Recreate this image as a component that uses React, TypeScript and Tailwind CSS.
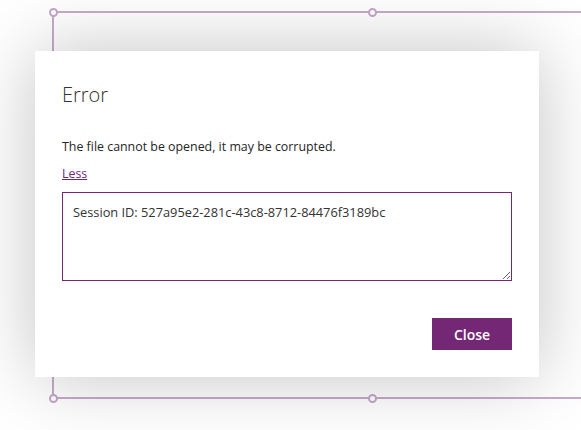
import { useState } from 'react'

const FONT = { fontFamily: '"Open Sans", "Noto Sans", sans-serif' }

function Handle({ className }: { className: string }) {
  return (
    <span
      className={`absolute w-[9px] h-[9px] rounded-full border-2 border-[#c6a6c8] bg-white ${className}`}
    />
  )
}

export default function App() {
  const [open, setOpen] = useState(true)

  return (
    <div className="relative w-[581px] h-[430px] overflow-hidden bg-white pl-[35px] pt-[51px]" style={FONT}>
      {/* selected control on the canvas, behind the dialog */}
      <div className="absolute left-[52px] top-[11px] w-[620px] h-[388px] border-2 border-r-0 border-[#c9aacb]">
        <Handle className="-left-[5.5px] -top-[5.5px]" />
        <Handle className="left-[314px] -top-[5.5px]" />
        <Handle className="-left-[5.5px] -bottom-[5.5px]" />
        <Handle className="left-[314px] -bottom-[5.5px]" />
      </div>

      {open && (
        <div className="relative z-10 w-[504px] h-[326px] bg-white shadow-[0_0_70px_rgba(0,0,0,0.24)] px-[27px] pt-[30px] flex flex-col">
          <h1 className="text-[20px] leading-[28px] font-light text-[#333333]">Error</h1>

          <p className="mt-[28px] text-[12.4px] leading-5 text-[#252525]">
            The file cannot be opened, it may be corrupted.
          </p>

          <a href="#" className="mt-[7px] w-fit text-[12.4px] leading-5 text-[#742774] underline">
            Less
          </a>

          <textarea
            readOnly
            defaultValue="Session ID: 527a95e2-281c-43c8-8712-84476f3189bc"
            className="mt-[8px] h-[89px] w-full border border-[#742774] px-[10px] pt-[9px] text-[12.8px] leading-5 text-[#333333] outline-none resize-y"
            style={FONT}
          />

          <div className="mt-[37px] flex justify-end">
            <button
              onClick={() => setOpen(false)}
              className="w-[80px] h-[32px] bg-[#742774] text-white text-[14px] font-semibold"
            >
              Close
            </button>
          </div>
        </div>
      )}
    </div>
  )
}
